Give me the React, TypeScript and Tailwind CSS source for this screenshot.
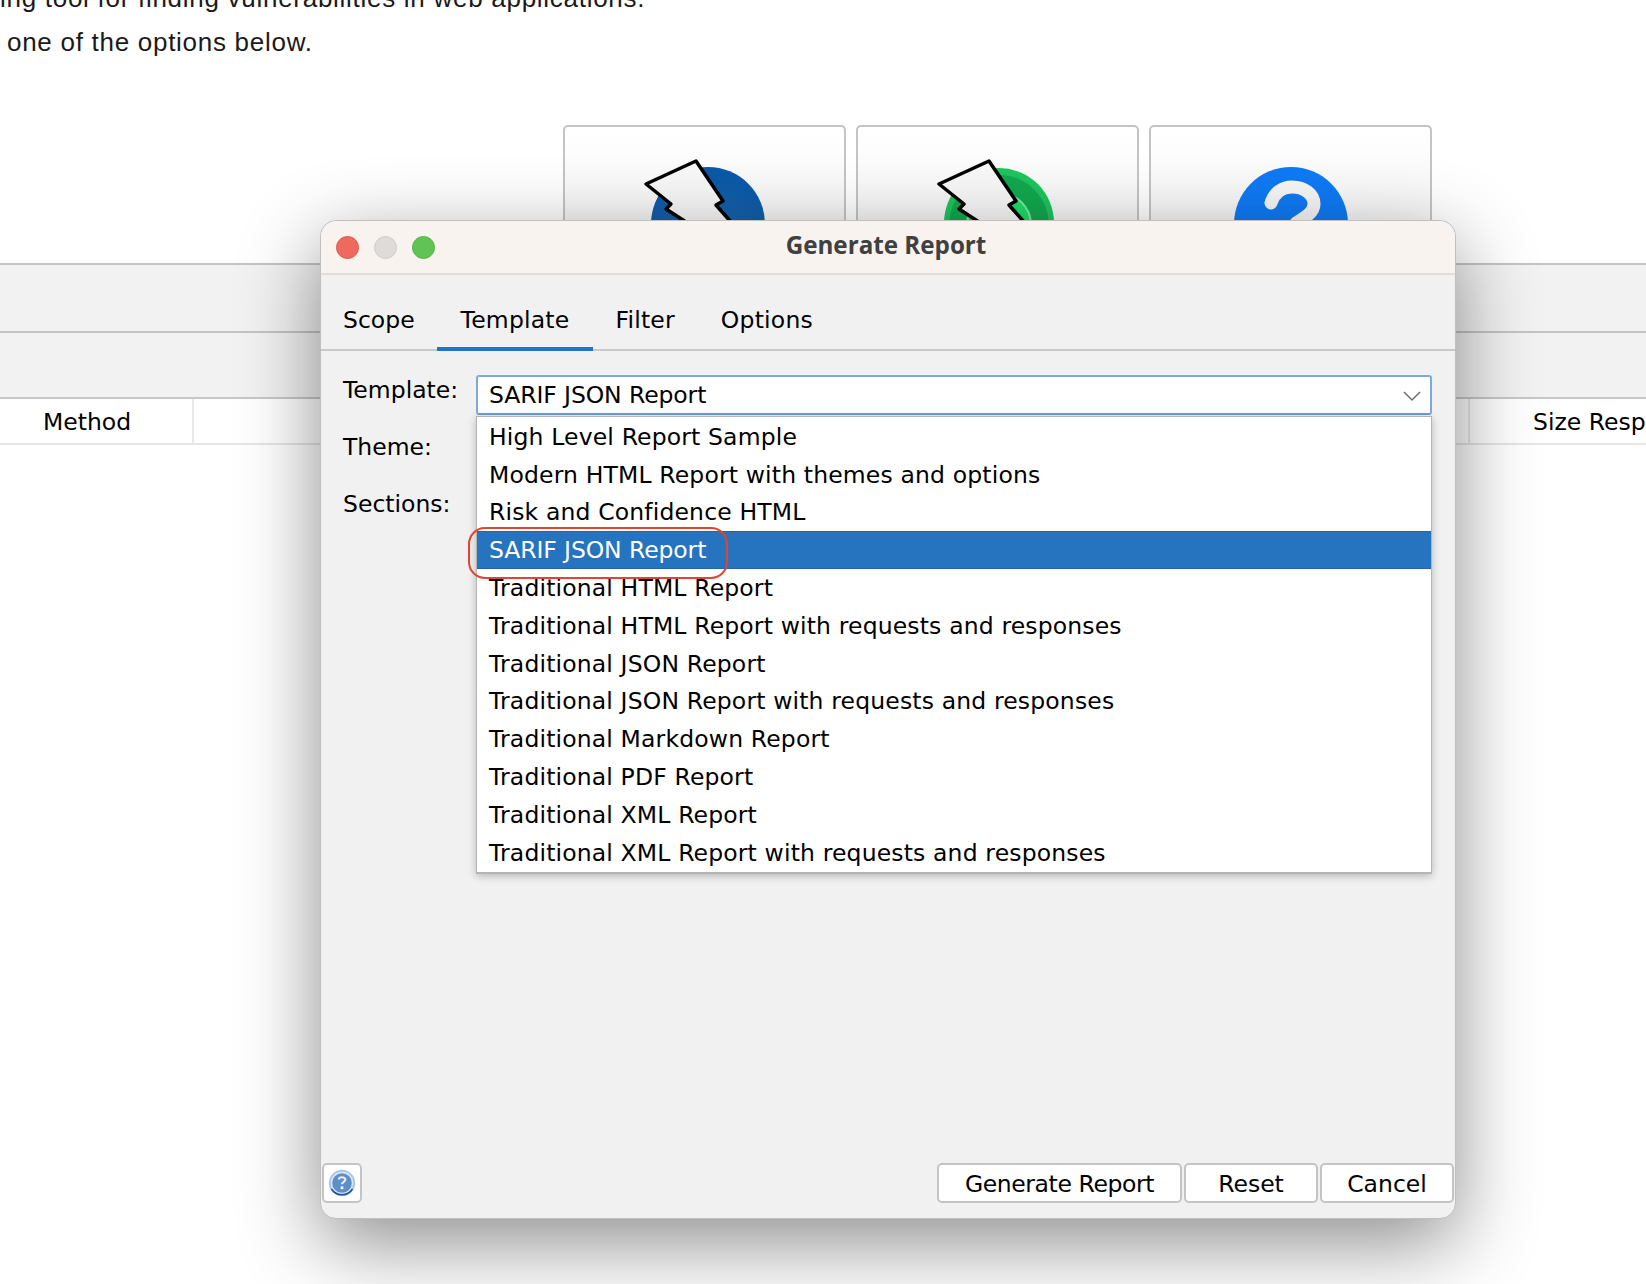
const templates = [
  "High Level Report Sample",
  "Modern HTML Report with themes and options",
  "Risk and Confidence HTML",
  "SARIF JSON Report",
  "Traditional HTML Report",
  "Traditional HTML Report with requests and responses",
  "Traditional JSON Report",
  "Traditional JSON Report with requests and responses",
  "Traditional Markdown Report",
  "Traditional PDF Report",
  "Traditional XML Report",
  "Traditional XML Report with requests and responses",
];

function BoltIcon() {
  return (
    <svg viewBox="0 0 100 70" className="absolute left-[74px] top-[28px] w-[100px] h-[70px]">
      <path
        d="M57 6 L7 29 L32 49 L27 54 L47 67 L92 67 L77 50 L84 46 Z"
        fill="#f8f8f8"
        stroke="#000"
        strokeWidth="3.5"
        strokeLinejoin="round"
      />
    </svg>
  );
}

function BlueDisc() {
  return (
    <svg viewBox="0 0 114 56" className="absolute left-[86px] top-[40px] w-[114px] h-[56px]">
      <defs>
        <radialGradient id="blueDisc" cx="0.5" cy="1" r="0.9">
          <stop offset="0" stopColor="#2f6db5" />
          <stop offset="1" stopColor="#0b5aa8" />
        </radialGradient>
      </defs>
      <circle cx="57" cy="57" r="57" fill="url(#blueDisc)" />
    </svg>
  );
}

function GreenDisc() {
  return (
    <svg viewBox="0 0 110 58" className="absolute left-[86px] top-[38px] w-[110px] h-[58px]">
      <circle cx="55" cy="58" r="55" fill="#1fc45c" />
      <circle cx="55" cy="60" r="50" fill="#12a84e" />
      <circle cx="55" cy="60" r="32" fill="#1edb66" stroke="#7be8a4" strokeWidth="2" />
    </svg>
  );
}

function QuestionDisc() {
  return (
    <svg viewBox="0 0 114 56" className="absolute left-[83px] top-[40px] w-[114px] h-[56px]">
      <circle cx="57" cy="57" r="57" fill="#0f7af5" />
      <path
        d="M37 36 C40 26 48 20 58 20 C70 20 80 27 80 37 C80 45 72 50 62 56"
        fill="none"
        stroke="#f7f7f7"
        strokeWidth="13"
        strokeLinecap="round"
      />
    </svg>
  );
}

function HelpIcon() {
  return (
    <svg viewBox="0 0 28 28" className="w-[28px] h-[28px]">
      <circle cx="14" cy="14" r="13.2" fill="#a9c6e8" />
      <circle cx="14" cy="14" r="11.2" fill="#dbe7f4" />
      <circle cx="14" cy="14" r="9.8" fill="#5c8ec8" />
      <path d="M3.5 20 A12.4 12.4 0 0 0 24.5 20" fill="none" stroke="#1d4f9c" strokeWidth="1.5" />
      <path
        d="M10.8 10.6 C10.8 7.6 17.4 7.4 17.4 10.6 C17.4 12.8 14 12.8 14 15.2"
        fill="none"
        stroke="#e4edf7"
        strokeWidth="2.2"
      />
      <rect x="12.6" y="17.4" width="2.8" height="2.8" fill="#f2f6fb" />
    </svg>
  );
}

export default function App() {
  return (
    <div className="relative w-[1646px] h-[1284px] overflow-hidden bg-white text-black font-['DejaVu_Sans',sans-serif] text-[23.5px]">
      {/* page behind the dialog */}
      <div className="font-['Liberation_Sans',sans-serif] text-[26px] tracking-[0.72px] leading-[44px] text-[#1a1a1a]">
        <p className="-mt-[24px] whitespace-nowrap">ing tool for finding vulnerabilities in web applications.</p>
        <p className="pl-[7px]">one of the options below.</p>
      </div>

      <div className="flex justify-end gap-[10px] pr-[214px] mt-[61px]">
        <div className="relative w-[283px] h-[138px] rounded-t-[5px] border-2 border-[#c4c4c4] bg-gradient-to-b from-white to-[#f3f3f3]">
          <BlueDisc />
          <BoltIcon />
        </div>
        <div className="relative w-[283px] h-[138px] rounded-t-[5px] border-2 border-[#c4c4c4] bg-gradient-to-b from-white to-[#f3f3f3]">
          <GreenDisc />
          <BoltIcon />
        </div>
        <div className="relative w-[283px] h-[138px] rounded-t-[5px] border-2 border-[#c4c4c4] bg-gradient-to-b from-white to-[#f3f3f3]">
          <QuestionDisc />
        </div>
      </div>

      <div className="h-[68px] border-t-2 border-[#c4c4c4] bg-[#f2f2f2]" />
      <div className="h-[66px] border-t-2 border-[#c4c4c4] bg-[#f2f2f2]" />
      <div className="flex h-[48px] border-t-2 border-b-2 border-t-[#c8c8c8] border-b-[#e6e6e6] bg-white">
        <div className="w-[194px] flex items-center pl-[43px] pt-[3px] border-r-2 border-[#e8e8e8]">Method</div>
        <div className="flex-1 border-r-2 border-[#e8e8e8]" />
        <div className="w-[176px] flex items-center pl-[63px] pt-[3px] whitespace-nowrap overflow-hidden">Size Resp</div>
      </div>

      {/* Generate Report dialog */}
      <div className="absolute left-[320px] top-[220px] w-[1136px] h-[999px] flex flex-col rounded-[16px] border border-[#c0c0c0] bg-[#f1f1f1] shadow-[0_24px_80px_0_rgba(0,0,0,0.45)]">
        <div className="relative h-[54px] shrink-0 flex items-center justify-center rounded-t-[16px] border-b-2 border-[#e0dedb] bg-[#f8f3ef]">
          <div className="absolute left-[15px] flex gap-[15px]">
            <span className="w-[23px] h-[23px] rounded-full bg-[#ec6a5e] border border-[#d9594e]" />
            <span className="w-[23px] h-[23px] rounded-full bg-[#dedbd8] border border-[#cfccc9]" />
            <span className="w-[23px] h-[23px] rounded-full bg-[#5fc454] border border-[#52b348]" />
          </div>
          <span className="mr-[4px] mb-[3px] font-['Open_Sans',sans-serif] font-bold text-[24.2px] text-[#404040]">Generate Report</span>
        </div>

        <div className="flex h-[76px] shrink-0 items-end pl-[22px] border-b-2 border-[#c8c8c8]">
          <div className="h-[48px] -mb-[2px] border-b-[4px] border-transparent">Scope</div>
          <div className="h-[48px] -mb-[2px] ml-[22px] px-[24px] border-b-[4px] border-[#2673bf] tracking-[0.2px]">Template</div>
          <div className="h-[48px] -mb-[2px] ml-[22px] border-b-[4px] border-transparent tracking-[0.2px]">Filter</div>
          <div className="h-[48px] -mb-[2px] ml-[46px] border-b-[4px] border-transparent tracking-[0.2px]">Options</div>
        </div>

        <div className="relative flex flex-1 pt-[25px] pl-[22px] pr-[23px]">
          <div className="w-[133px] shrink-0 flex flex-col gap-[28px] leading-[29px]">
            <span>Template:</span>
            <span>Theme:</span>
            <span>Sections:</span>
          </div>
          <div className="relative flex-1 -mt-[1px]">
            <div className="flex h-[40px] items-center justify-between pl-[11px] pr-[8px] pt-[2px] rounded-[3px] border-2 border-[#7dabd9] border-b-[#6f9fd0] bg-white tracking-[-0.1px]">
              <span>SARIF JSON Report</span>
              <svg viewBox="0 0 20 12" className="w-[20px] h-[12px]">
                <path d="M2 2 L10 10 L18 2" fill="none" stroke="#6f6f6f" strokeWidth="1.5" />
              </svg>
            </div>

            {/* open dropdown */}
            <div className="absolute left-0 right-0 top-[41px] pt-[1px] border border-[#b5b5b5] border-b-2 bg-white shadow-[0_2px_8px_rgba(0,0,0,0.25)] tracking-[0.15px]">
              {templates.map((item, i) => (
                <div
                  key={item}
                  className={
                    i === 3
                      ? "flex h-[37.8px] items-center pl-[12px] pt-[1px] border-y border-[#1f66ab] bg-[#2673bf] text-white tracking-[-0.1px]"
                      : "flex h-[37.8px] items-center pl-[12px] pt-[1px]"
                  }
                >
                  {item}
                </div>
              ))}
              {/* red annotation around the selected item */}
              <div className="absolute -left-[9px] top-[110px] w-[260px] h-[52px] rounded-[17px] border-2 border-[#e0452f]" />
            </div>
          </div>
        </div>

        <div className="flex items-center justify-between shrink-0 pl-[1px] pr-[1px] pb-[15px]">
          <button className="flex w-[40px] h-[40px] items-center justify-center rounded-[5px] border-2 border-[#c4c4c4] bg-white">
            <HelpIcon />
          </button>
          <div className="flex gap-[2px]">
            <button className="w-[245px] h-[40px] pt-[2px] rounded-[5px] border-2 border-[#c4c4c4] bg-white tracking-[-0.4px]">Generate Report</button>
            <button className="w-[134px] h-[40px] pt-[2px] rounded-[5px] border-2 border-[#c4c4c4] bg-white">Reset</button>
            <button className="w-[134px] h-[40px] pt-[2px] rounded-[5px] border-2 border-[#c4c4c4] bg-white">Cancel</button>
          </div>
        </div>
      </div>
    </div>
  );
}
